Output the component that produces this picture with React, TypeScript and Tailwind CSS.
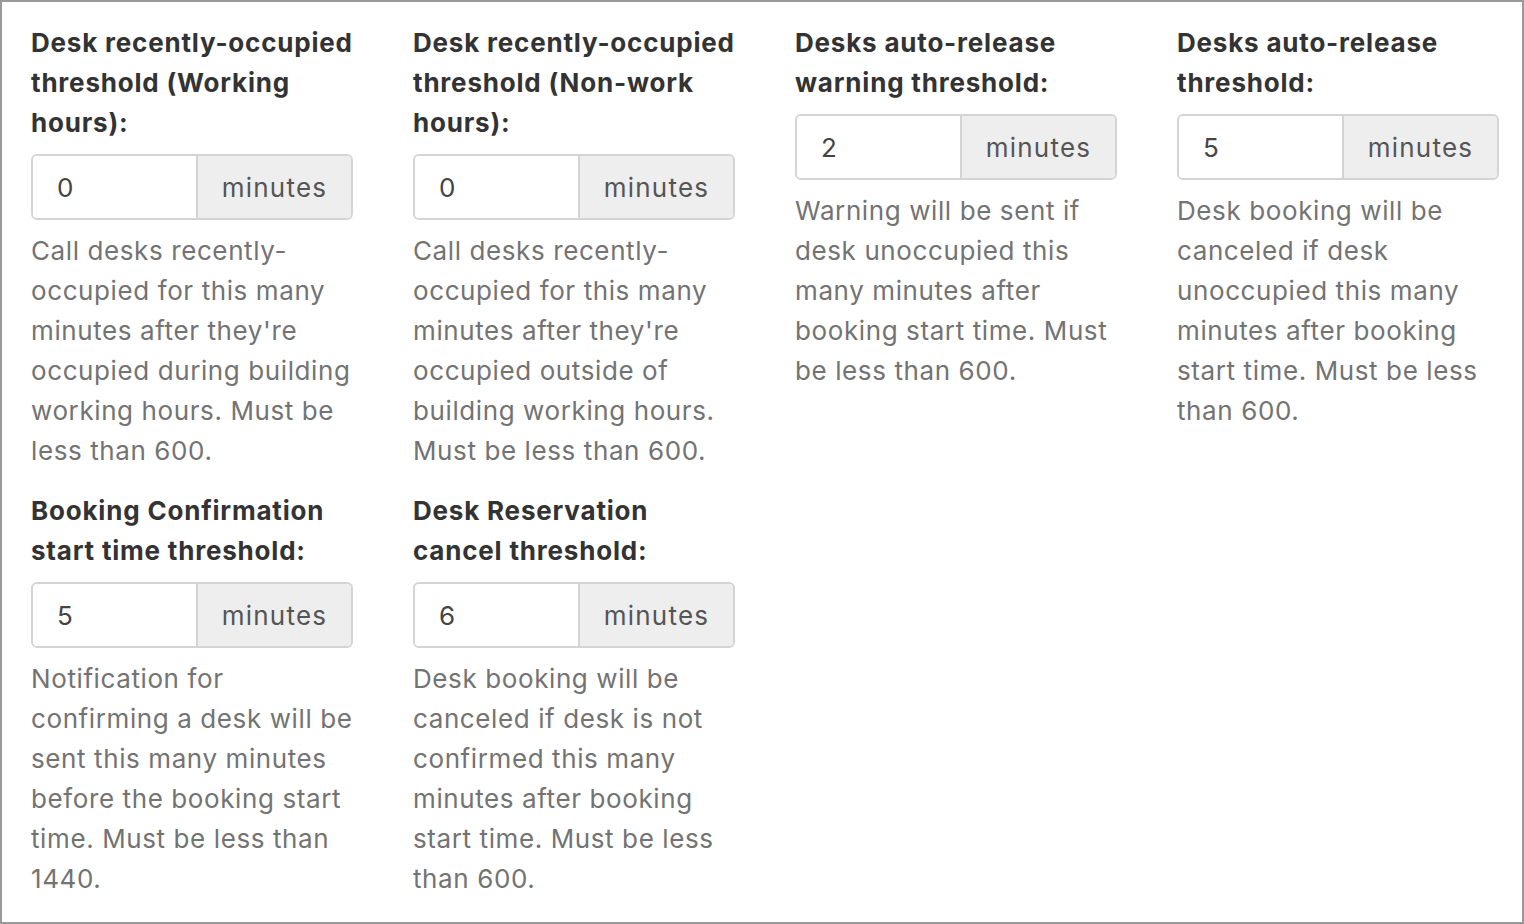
import type { ReactNode } from "react";

type Field = {
  label: string[];
  value: string;
  help: string[];
};

const rowOne: Field[] = [
  {
    label: ["Desk recently-occupied", "threshold (Working", "hours):"],
    value: "0",
    help: [
      "Call desks recently-",
      "occupied for this many",
      "minutes after they're",
      "occupied during building",
      "working hours. Must be",
      "less than 600.",
    ],
  },
  {
    label: ["Desk recently-occupied", "threshold (Non-work", "hours):"],
    value: "0",
    help: [
      "Call desks recently-",
      "occupied for this many",
      "minutes after they're",
      "occupied outside of",
      "building working hours.",
      "Must be less than 600.",
    ],
  },
  {
    label: ["Desks auto-release", "warning threshold:"],
    value: "2",
    help: [
      "Warning will be sent if",
      "desk unoccupied this",
      "many minutes after",
      "booking start time. Must",
      "be less than 600.",
    ],
  },
  {
    label: ["Desks auto-release", "threshold:"],
    value: "5",
    help: [
      "Desk booking will be",
      "canceled if desk",
      "unoccupied this many",
      "minutes after booking",
      "start time. Must be less",
      "than 600.",
    ],
  },
];

const rowTwo: Field[] = [
  {
    label: ["Booking Confirmation", "start time threshold:"],
    value: "5",
    help: [
      "Notification for",
      "confirming a desk will be",
      "sent this many minutes",
      "before the booking start",
      "time. Must be less than",
      "1440.",
    ],
  },
  {
    label: ["Desk Reservation", "cancel threshold:"],
    value: "6",
    help: [
      "Desk booking will be",
      "canceled if desk is not",
      "confirmed this many",
      "minutes after booking",
      "start time. Must be less",
      "than 600.",
    ],
  },
];

function Lines({ lines }: { lines: string[] }) {
  return (
    <>
      {lines.map((l, i) => (
        <span key={i} className="block whitespace-nowrap">
          {l}
        </span>
      ))}
    </>
  );
}

function MinutesInput({ value }: { value: string }) {
  return (
    <div className="flex h-[66px] w-[322px] overflow-hidden rounded-[6px] border-2 border-[#d4d4d4]">
      <div className="flex w-[163px] items-center bg-white pl-[24px] text-[26px] text-[#444]">
        {value}
      </div>
      <div className="flex flex-1 items-center justify-center border-l-2 border-[#d4d4d4] bg-[#eeeeee] text-[26px] tracking-[1.2px] text-[#555]">
        minutes
      </div>
    </div>
  );
}

function FieldBlock({ field }: { field: Field }) {
  return (
    <div className="w-[322px]">
      <label className="block text-[26px] leading-[40px] font-bold tracking-[0.8px] text-[#333]">
        <Lines lines={field.label} />
      </label>
      <div className="mt-[11px]">
        <MinutesInput value={field.value} />
      </div>
      <p className="mt-[11px] text-[26px] leading-[40px] tracking-[0.6px] text-[#737373]">
        <Lines lines={field.help} />
      </p>
    </div>
  );
}

function Row({ children }: { children: ReactNode }) {
  return <div className="flex items-start gap-x-[60px]">{children}</div>;
}

export default function App() {
  return (
    <div
      className="h-[924px] w-[1524px] border-2 border-[#999] bg-white pl-[29px] pt-[21px]"
      style={{ fontFamily: "Inter, 'Noto Sans', sans-serif" }}
    >
      <div className="flex flex-col gap-y-[20px]">
        <Row>
          {rowOne.map((f, i) => (
            <FieldBlock key={i} field={f} />
          ))}
        </Row>
        <Row>
          {rowTwo.map((f, i) => (
            <FieldBlock key={i} field={f} />
          ))}
        </Row>
      </div>
    </div>
  );
}
